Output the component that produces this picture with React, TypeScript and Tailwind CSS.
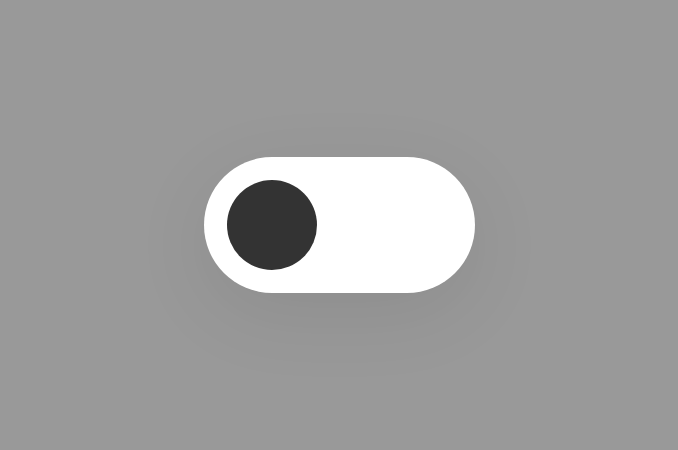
import React, { useState } from 'react';

const App: React.FC = () => {
  const [on, setOn] = useState(false);

  return (
    <div className="w-full h-screen bg-[#999999] flex items-center justify-center">
      <button
        type="button"
        onClick={() => setOn(v => !v)}
        aria-pressed={on}
        className={`w-[271px] h-[136px] rounded-full bg-white p-[23px] flex items-center shadow-[0_20px_80px_rgba(0,0,0,0.08)] ${
          on ? 'justify-end' : 'justify-start'
        }`}
      >
        <span className="block w-[90px] h-[90px] rounded-full bg-[#333333]" />
      </button>
    </div>
  );
};

export default App;
